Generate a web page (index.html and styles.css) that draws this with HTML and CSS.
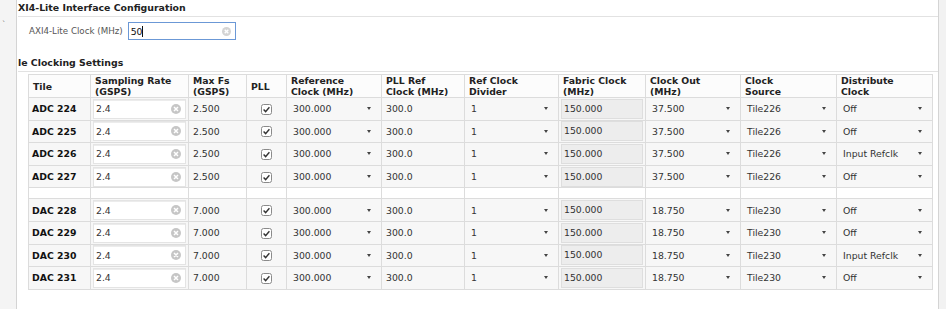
FILE: index.html
```html
<!DOCTYPE html>
<html lang="en">

<head>
    <meta charset="utf-8">
    <title>RF Data Converter - Clocking</title>
    <link rel="stylesheet" href="styles.css">
</head>

<body>

<div class="ramme">
    <div class="venstre"><span class="mærke">`</span></div>

    <main class="indhold">
        <h2 class="overskrift">XI4-Lite Interface Configuration</h2>
        <div class="axi">
            <label>AXI4-Lite Clock (MHz)</label>
            <div class="felt aktiv">
                <span>50<i class="caret"></i></span>
                <svg class="ryd lys" width="9" height="9" viewBox="0 0 10 10"><circle cx="5" cy="5" r="5"/><path d="M3 3L7 7M7 3L3 7"/></svg>
            </div>
        </div>

        <h2 class="overskrift anden">le Clocking Settings</h2>

        <table id="tiles">
            <colgroup>
                <col style="width:62px"><col style="width:98px"><col style="width:58px"><col style="width:40px">
                <col style="width:95px"><col style="width:83px"><col style="width:94px"><col style="width:87px">
                <col style="width:95px"><col style="width:96px"><col style="width:96px">
            </colgroup>
            <thead>
                <tr>
                    <th>Tile</th>
                    <th>Sampling Rate<br>(GSPS)</th>
                    <th>Max Fs<br>(GSPS)</th>
                    <th>PLL</th>
                    <th>Reference<br>Clock (MHz)</th>
                    <th>PLL Ref<br>Clock (MHz)</th>
                    <th>Ref Clock<br>Divider</th>
                    <th>Fabric Clock<br>(MHz)</th>
                    <th>Clock Out<br>(MHz)</th>
                    <th>Clock<br>Source</th>
                    <th>Distribute<br>Clock</th>
                </tr>
            </thead>
            <tbody id="rækker"></tbody>
        </table>
    </main>

    <div class="højre"></div>
</div>

<script>
    let tiles = [
        { navn: "ADC 224", maks: "2.500", ud: "37.500", kilde: "Tile226", fordel: "Off" },
        { navn: "ADC 225", maks: "2.500", ud: "37.500", kilde: "Tile226", fordel: "Off" },
        { navn: "ADC 226", maks: "2.500", ud: "37.500", kilde: "Tile226", fordel: "Input Refclk" },
        { navn: "ADC 227", maks: "2.500", ud: "37.500", kilde: "Tile226", fordel: "Off" },
        null,
        { navn: "DAC 228", maks: "7.000", ud: "18.750", kilde: "Tile230", fordel: "Off" },
        { navn: "DAC 229", maks: "7.000", ud: "18.750", kilde: "Tile230", fordel: "Off" },
        { navn: "DAC 230", maks: "7.000", ud: "18.750", kilde: "Tile230", fordel: "Input Refclk" },
        { navn: "DAC 231", maks: "7.000", ud: "18.750", kilde: "Tile230", fordel: "Off" }
    ];

    let dest = document.querySelector("#rækker");

    function vælg(tekst) {
        return `<div class="vaelg"><span>${tekst}</span><i class="pil"></i></div>`;
    }

    tiles.forEach(t => {
        if (t == null) {
            dest.insertAdjacentHTML("beforeend", `<tr class="tom">${"<td></td>".repeat(11)}</tr>`);
            return;
        }
        let template = `
        <tr>
            <td class="navn">${t.navn}</td>
            <td><div class="felt"><span>2.4</span>
                <svg class="ryd" width="10" height="10" viewBox="0 0 10 10"><circle cx="5" cy="5" r="5"/><path d="M3 3L7 7M7 3L3 7"/></svg></div></td>
            <td class="tekst">${t.maks}</td>
            <td class="midt"><svg width="11" height="11" viewBox="0 0 11 11"><rect x="0.5" y="0.5" width="10" height="10" rx="2" fill="#fff" stroke="#8a8a8a"/><path d="M2.6 5.6L4.6 7.6L8.4 3.2" fill="none" stroke="#333" stroke-width="1.4"/></svg></td>
            <td>${vælg("300.000")}</td>
            <td class="tekst">300.0</td>
            <td>${vælg("1")}</td>
            <td><div class="laast">150.000</div></td>
            <td>${vælg(t.ud)}</td>
            <td>${vælg(t.kilde)}</td>
            <td>${vælg(t.fordel)}</td>
        </tr>`;
        dest.insertAdjacentHTML("beforeend", template);
    });
</script>

</body>

</html>
```

FILE: styles.css
```css
body {
    margin: 0;
    font-family: "DejaVu Sans", sans-serif;
    font-size: 9.3px;
    color: #333;
    background: #fff;
}

.ramme {
    display: flex;
    height: 309px;
    overflow: hidden;
}

.venstre {
    box-sizing: border-box;
    width: 17px;
    padding-top: 22px;
    background: #f4f4f4;
    border-right: 1px solid #d4d4d4;
}

.mærke {
    display: block;
    padding-left: 2px;
    line-height: 8px;
    color: #777;
    font-size: 8px;
}

.højre {
    width: 7px;
    background: #f2f2f2;
    border-left: 1px solid #d4d4d4;
}

.indhold {
    flex: 1;
    padding-left: 1px;
}

.overskrift {
    margin: 0;
    height: 16px;
    line-height: 16px;
    font-size: 9.4px;
    font-weight: bold;
    color: #222;
    border-bottom: 1px solid #e2e2e2;
}

.anden {
    margin-top: 17px;
    height: 14px;
    line-height: 12px;
}

.axi {
    display: flex;
    align-items: center;
    gap: 5px;
    margin: 5px 0 0 11px;
    color: #555;
    font-size: 8.7px;
}

.axi .felt {
    width: 100px;
    height: 16px;
    background: #fff;
    font-size: 9.3px;
}

.aktiv {
    border: 1px solid #6b98d6 !important;
    box-shadow: none !important;
    color: #111;
}

.caret {
    display: inline-block;
    width: 1px;
    height: 11px;
    background: #111;
    vertical-align: -2px;
}

#tiles {
    margin: 2px 0 0 10px;
    width: 904px;
    table-layout: fixed;
    border-collapse: collapse;
    border: 1px solid #d6d6d6;
}

#tiles th {
    height: 21px;
    padding: 0 0 0 4px;
    text-align: left;
    vertical-align: middle;
    font-weight: bold;
    line-height: 11px;
    color: #222;
    background: #fcfcfc;
    border: 1px solid #dcdcdc;
}

#tiles td {
    height: 21.6px;
    padding: 0 2px;
    background: #f7f7f7;
    border: 1px solid #dcdcdc;
    white-space: nowrap;
}

#tiles tr.tom td {
    height: 10px;
    background: #fff;
}

#tiles td.navn {
    padding-left: 3px;
    font-weight: bold;
    color: #111;
}

#tiles td.tekst {
    padding-left: 4px;
}

#tiles td.midt {
    text-align: center;
}

.midt svg {
    display: block;
    margin: 1px auto 0;
}

.felt {
    display: flex;
    align-items: center;
    justify-content: space-between;
    height: 18px;
    padding: 0 4px 0 2px;
    background: #fff;
    border: 1px solid #e4e4e4;
    box-shadow: inset 0 1px 0 #ececec;
}

.ryd circle {
    fill: #c6c6c6;
}

.ryd path {
    stroke: #fff;
    stroke-width: 1.5;
}

.ryd.lys circle {
    fill: #d4d4d4;
}

.vaelg {
    display: flex;
    align-items: center;
    justify-content: space-between;
    padding: 0 8px 0 4px;
}

.pil {
    width: 0;
    height: 0;
    border-left: 2.5px solid transparent;
    border-right: 2.5px solid transparent;
    border-top: 3px solid #444;
}

.laast {
    height: 18px;
    line-height: 18px;
    padding-left: 2px;
    background: #ededed;
    border: 1px solid #dedede;
}
```
